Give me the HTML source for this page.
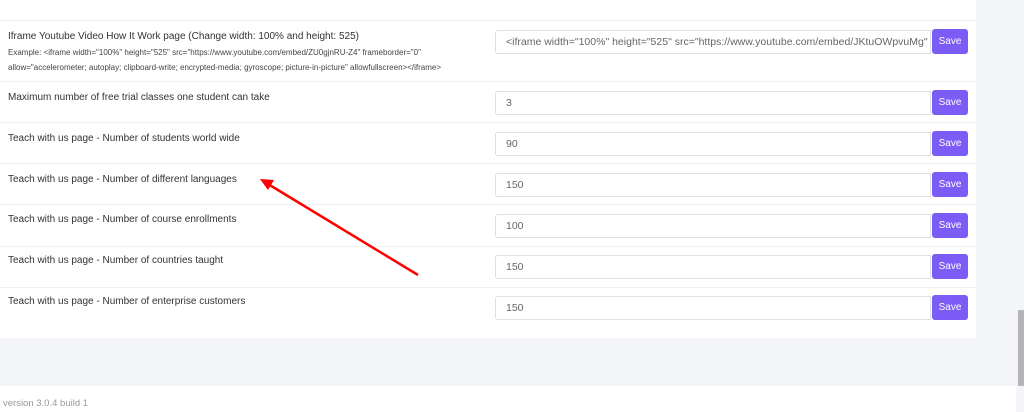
<!DOCTYPE html>
<html><head><style>
body{margin:0;width:1024px;height:412px;background:#f4f5f8;font-family:"Liberation Sans",sans-serif;position:relative;overflow:hidden}
.card{position:absolute;left:0;top:0;width:976px;height:338px;background:#fff}
.sep{position:absolute;left:0;width:976px;height:1px;background:#eef0f3}
.lbl{position:absolute;left:8px;font-size:10px;color:#333}
.small{position:absolute;left:8px;font-size:8px;color:#444}
.inp{position:absolute;left:495px;width:436px;height:24px;border:1px solid #dcdfe4;border-radius:3px 0 0 3px;box-sizing:border-box;font-size:10.5px;color:#666;padding-left:10px;line-height:22px;white-space:nowrap;overflow:hidden}
.btn{position:absolute;left:932px;width:36px;height:25px;background:#7b5cf5;border-radius:3px;color:#fff;font-size:10px;text-align:center;line-height:26px}
.foot{position:absolute;left:0;top:386px;width:1016px;height:26px;background:#fff;font-size:9.5px;color:#999}
.sb{position:absolute;left:1018px;top:310px;width:6px;height:76px;background:#b5b5b5}
</style></head><body>
<div class="card"></div>
<div class="sep" style="top:20px"></div>
<div class="sep" style="top:81px"></div>
<div class="sep" style="top:122px"></div>
<div class="sep" style="top:163px"></div>
<div class="sep" style="top:204px"></div>
<div class="sep" style="top:246px"></div>
<div class="sep" style="top:287px"></div>
<div class="lbl" style="top:31px">Iframe Youtube Video How It Work page (Change width: 100% and height: 525)</div>
<div class="small" style="top:48px">Example: &lt;iframe width="100%" height="525" src="https://www.youtube.com/embed/ZU0gjnRU-Z4" frameborder="0"</div>
<div class="small" style="top:63px">allow="accelerometer; autoplay; clipboard-write; encrypted-media; gyroscope; picture-in-picture" allowfullscreen&gt;&lt;/iframe&gt;</div>
<div class="inp" style="top:30px">&lt;iframe width="100%" height="525" src="https://www.youtube.com/embed/JKtuOWpvuMg" fr</div><div class="btn" style="top:29px">Save</div>
<div class="lbl" style="top:92px">Maximum number of free trial classes one student can take</div>
<div class="inp" style="top:91px">3</div><div class="btn" style="top:90px">Save</div>
<div class="lbl" style="top:133px">Teach with us page - Number of students world wide</div>
<div class="inp" style="top:132px">90</div><div class="btn" style="top:131px">Save</div>
<div class="lbl" style="top:174px">Teach with us page - Number of different languages</div>
<div class="inp" style="top:173px">150</div><div class="btn" style="top:172px">Save</div>
<div class="lbl" style="top:214px">Teach with us page - Number of course enrollments</div>
<div class="inp" style="top:214px">100</div><div class="btn" style="top:213px">Save</div>
<div class="lbl" style="top:255px">Teach with us page - Number of countries taught</div>
<div class="inp" style="top:255px">150</div><div class="btn" style="top:254px">Save</div>
<div class="lbl" style="top:296px">Teach with us page - Number of enterprise customers</div>
<div class="inp" style="top:296px">150</div><div class="btn" style="top:295px">Save</div>
<svg style="position:absolute;left:0;top:0" width="1024" height="412"><line x1="418" y1="275" x2="268" y2="184" stroke="#f00" stroke-width="2.5"/><polygon points="260,179 274,180 268,190" fill="#f00"/></svg>
<div class="sb"></div>
<div class="foot"><span style="position:absolute;left:3px;top:12px">version 3.0.4 build 1</span></div>
</body></html>
